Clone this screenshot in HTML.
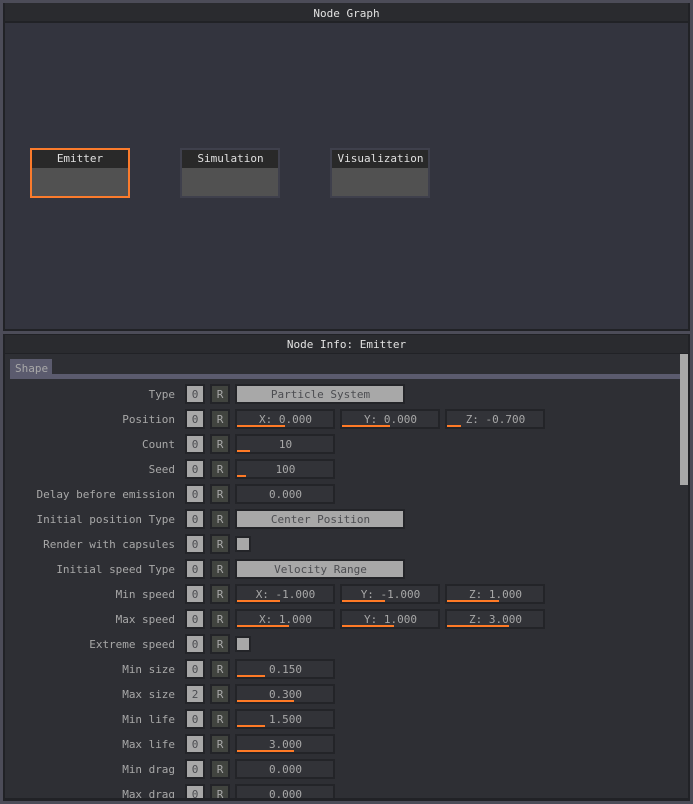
<!DOCTYPE html>
<html>
<head>
<meta charset="utf-8">
<style>
html,body{margin:0;padding:0;background:#4c4c58;}
body{position:relative;width:693px;height:804px;overflow:hidden;font:11px/20px "DejaVu Sans Mono","Liberation Mono",monospace;color:#a8a8a8;}
div{position:absolute;box-sizing:border-box;}
.panel{background:#212226;}
.title{left:2px;right:2px;height:18px;background:#2a2b2f;color:#e2e2e2;text-align:center;line-height:20px;}
.node{width:100px;height:50px;top:148px;background:#515151;border:2px solid #3f404c;}
.node.sel{border-color:#fb7b2c;}
.node div{left:0;top:0;width:96px;height:18px;background:#292929;color:#e0e0e0;text-align:center;line-height:18px;padding-left:1px;}
.r{left:0;width:693px;height:20px;}
.l{left:0;width:175px;text-align:right;height:20px;white-space:pre;line-height:22px;letter-spacing:-0.03px;}
.b{top:0;width:20px;height:20px;border:2px solid #232428;text-align:center;line-height:18px;color:#4c4d51;background:#a8a8a8;}
.z{left:185px;}
.x{left:210px;background:#41443f;color:#a8a8a8;}
.c{left:235px;top:0;width:170px;height:20px;border:2px solid #232428;background:#a8a8a8;color:#4c4d51;text-align:center;line-height:18px;white-space:pre;padding-left:1px;}
.s{top:0;width:100px;height:20px;border:2px solid #232428;background:#323338;color:#a8a8a8;text-align:center;line-height:18px;white-space:pre;padding-left:1px;}
.s i{position:absolute;left:0;top:14px;height:2px;background:#ff7a26;display:block;}
.s1{left:235px}.s2{left:340px}.s3{left:445px}
.k{left:235px;top:2px;width:16px;height:16px;border:2px solid #232428;background:#a8a8a8;}
</style>
</head>
<body>
<div class="panel" style="left:3px;top:3px;width:687px;height:328px;">
  <div class="title" style="top:0;line-height:21px;">Node Graph</div>
  <div style="left:2px;top:20px;right:2px;bottom:2px;background:#33343e;"></div>
</div>
<div class="node sel" style="left:30px;"><div style="padding-left:0;">Emitter</div></div>
<div class="node" style="left:180px;"><div>Simulation</div></div>
<div class="node" style="left:330px;"><div>Visualization</div></div>

<div class="panel" style="left:3px;top:334px;width:687px;height:467px;">
  <div class="title" style="top:1px;">Node Info: Emitter</div>
  <div style="left:2px;top:20px;right:2px;bottom:3px;background:#2e2f34;"></div>
</div>

<div style="left:0;top:354px;width:680px;height:444px;overflow:hidden;">
  <div style="left:10px;top:5px;width:42px;height:15px;background:#5b5b6e;color:#a8a8a8;padding-left:5px;line-height:20px;">Shape</div>
  <div style="left:10px;top:20px;width:670px;height:5px;background:#5b5b6e;"></div>

  <div class="r" style="top:30px;"><div class="l">Type</div><div class="b z">0</div><div class="b x">R</div><div class="c">Particle System</div></div>
  <div class="r" style="top:55px;"><div class="l">Position</div><div class="b z">0</div><div class="b x">R</div><div class="s s1">X: 0.000<i style="width:48px"></i></div><div class="s s2">Y: 0.000<i style="width:48px"></i></div><div class="s s3">Z: -0.700<i style="width:14px"></i></div></div>
  <div class="r" style="top:80px;"><div class="l">Count</div><div class="b z">0</div><div class="b x">R</div><div class="s s1">10<i style="width:13px"></i></div></div>
  <div class="r" style="top:105px;"><div class="l">Seed</div><div class="b z">0</div><div class="b x">R</div><div class="s s1">100<i style="width:9px"></i></div></div>
  <div class="r" style="top:130px;"><div class="l">Delay before emission</div><div class="b z">0</div><div class="b x">R</div><div class="s s1">0.000</div></div>
  <div class="r" style="top:155px;"><div class="l">Initial position Type</div><div class="b z">0</div><div class="b x">R</div><div class="c">Center Position</div></div>
  <div class="r" style="top:180px;"><div class="l">Render with capsules</div><div class="b z">0</div><div class="b x">R</div><div class="k"></div></div>
  <div class="r" style="top:205px;"><div class="l">Initial speed Type</div><div class="b z">0</div><div class="b x">R</div><div class="c">Velocity Range</div></div>
  <div class="r" style="top:230px;"><div class="l">Min speed</div><div class="b z">0</div><div class="b x">R</div><div class="s s1">X: -1.000<i style="width:43px"></i></div><div class="s s2">Y: -1.000<i style="width:43px"></i></div><div class="s s3">Z: 1.000<i style="width:52px"></i></div></div>
  <div class="r" style="top:255px;"><div class="l">Max speed</div><div class="b z">0</div><div class="b x">R</div><div class="s s1">X: 1.000<i style="width:52px"></i></div><div class="s s2">Y: 1.000<i style="width:52px"></i></div><div class="s s3">Z: 3.000<i style="width:62px"></i></div></div>
  <div class="r" style="top:280px;"><div class="l">Extreme speed</div><div class="b z">0</div><div class="b x">R</div><div class="k"></div></div>
  <div class="r" style="top:305px;"><div class="l">Min size</div><div class="b z">0</div><div class="b x">R</div><div class="s s1">0.150<i style="width:28px"></i></div></div>
  <div class="r" style="top:330px;"><div class="l">Max size</div><div class="b z">2</div><div class="b x">R</div><div class="s s1">0.300<i style="width:57px"></i></div></div>
  <div class="r" style="top:355px;"><div class="l">Min life</div><div class="b z">0</div><div class="b x">R</div><div class="s s1">1.500<i style="width:28px"></i></div></div>
  <div class="r" style="top:380px;"><div class="l">Max life</div><div class="b z">0</div><div class="b x">R</div><div class="s s1">3.000<i style="width:57px"></i></div></div>
  <div class="r" style="top:405px;"><div class="l">Min drag</div><div class="b z">0</div><div class="b x">R</div><div class="s s1">0.000</div></div>
  <div class="r" style="top:430px;"><div class="l">Max drag</div><div class="b z">0</div><div class="b x">R</div><div class="s s1">0.000</div></div>
</div>
<div style="left:680px;top:354px;width:8px;height:131px;background:#a8a8a8;"></div>
</body>
</html>
